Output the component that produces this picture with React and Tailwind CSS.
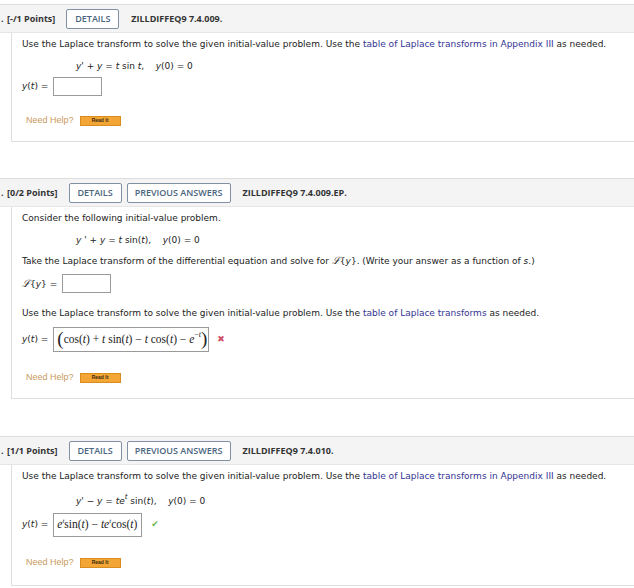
import React from "react";

const sans = { fontFamily: '"DejaVu Sans", Verdana, sans-serif' };
const open = { fontFamily: '"Open Sans", Arial, sans-serif' };

function Header({ points, code, prev }) {
  return (
    <div
      className="flex items-center h-[29px] border-t border-b border-t-[#dcdcdc] border-b-[#e6e6e6] bg-[#f4f4f4] text-[9px] font-bold text-[#333]"
      style={open}
    >
      <span className="w-[7px] pl-[1px]">.</span>
      <span>{points}</span>
      <button className="ml-[11px] w-[53px] h-[20px] border border-[#7f91a3] rounded-[2px] bg-white text-[#4a6580] font-semibold text-[9px]">
        DETAILS
      </button>
      {prev && (
        <button className="ml-[5px] w-[104px] h-[20px] border border-[#7f91a3] rounded-[2px] bg-white text-[#4a6580] font-semibold text-[9px]">
          PREVIOUS ANSWERS
        </button>
      )}
      <span className="ml-[12px]">{code}</span>
    </div>
  );
}

function NeedHelp({ mt }) {
  return (
    <div className={`flex items-center h-[12px] ${mt}`}>
      <span
        className="ml-[4px] text-[9px] text-[#c99b5e]"
        style={{ fontFamily: '"Liberation Sans", Arial, sans-serif' }}
      >
        Need Help?
      </span>
      <span
        className="ml-[6px] w-[41px] h-[10px] flex items-center justify-center bg-[#f3a535] border border-[#d98d1f] text-[5px] font-bold text-[#3a2a10]"
        style={{ fontFamily: '"Liberation Sans", Arial, sans-serif' }}
      >
        Read It
      </span>
    </div>
  );
}

const I = ({ children }) => <i>{children}</i>;

const serif = { fontFamily: '"Liberation Serif", "Times New Roman", serif' };

export default function App() {
  return (
    <div className="w-[634px] h-[588px] overflow-hidden bg-white text-[#222]" style={sans}>
      {/* Question 1 */}
      <div className="mt-[4px]">
        <Header points="[-/1 Points]" code="ZILLDIFFEQ9 7.4.009." />
        <div className="ml-[11px] border-l border-b border-[#dedede] pl-[10px] pt-[5px] pb-[14px] text-[9px]">
          <div className="leading-[12px] whitespace-nowrap">
            Use the Laplace transform to solve the given initial-value problem. Use the{" "}
            <span className="text-[#343494]">table of Laplace transforms in Appendix III</span> as needed.
          </div>
          <div className="mt-[10px] ml-[54px] leading-[12px] whitespace-pre">
            <I>y</I>' + <I>y</I> = <I>t</I> sin <I>t</I>,{"    "}<I>y</I>(0) = 0
          </div>
          <div className="mt-[5px] flex items-center h-[19px]">
            <span>
              <I>y</I>(<I>t</I>) =
            </span>
            <span className="ml-[5px] w-[49px] h-[19px] border border-[#9a9a9a]" />
          </div>
          <NeedHelp mt="mt-[19px]" />
        </div>
      </div>

      {/* Question 2 */}
      <div className="mt-[36px]">
        <Header points="[0/2 Points]" code="ZILLDIFFEQ9 7.4.009.EP." prev />
        <div className="ml-[11px] border-l border-b border-[#dedede] pl-[10px] pt-[5px] pb-[14px] text-[9px]">
          <div className="leading-[12px]">Consider the following initial-value problem.</div>
          <div className="mt-[10px] ml-[54px] leading-[12px] whitespace-pre">
            <I>y</I> ' + <I>y</I> = <I>t</I> sin(<I>t</I>),{"    "}<I>y</I>(0) = 0
          </div>
          <div className="mt-[9px] leading-[12px] whitespace-nowrap">
            Take the Laplace transform of the differential equation and solve for{" "}
            <span style={serif} className="italic text-[10px]">ℒ</span>{"{"}<I>y</I>{"}"}. (Write your answer as a function of <I>s</I>.)
          </div>
          <div className="mt-[7px] flex items-center h-[19px]">
            <span>
              <span style={serif} className="italic text-[10px]">ℒ</span>{"{"}<I>y</I>{"}"} =
            </span>
            <span className="ml-[5px] w-[49px] h-[19px] border border-[#9a9a9a]" />
          </div>
          <div className="mt-[14px] leading-[12px] whitespace-nowrap">
            Use the Laplace transform to solve the given initial-value problem. Use the{" "}
            <span className="text-[#343494]">table of Laplace transforms</span> as needed.
          </div>
          <div className="mt-[8px] flex items-center h-[25px]">
            <span>
              <I>y</I>(<I>t</I>) =
            </span>
            <span
              className="ml-[5px] w-[156px] h-[25px] border border-[#9a9a9a] flex items-center pl-[3px] text-[11.5px] whitespace-pre"
              style={serif}
            >
              <span className="text-[19px] leading-none -mt-[2px]">(</span>
              cos(<I>t</I>) + <I>t</I> sin(<I>t</I>) − <I>t</I> cos(<I>t</I>) − <I>e</I>
              <sup className="text-[8px] -top-[5px]">−<I>t</I></sup>
              <span className="text-[19px] leading-none -mt-[2px]">)</span>
            </span>
            <span className="ml-[8px] text-[9px] text-[#d0506a]">✖</span>
          </div>
          <NeedHelp mt="mt-[20px]" />
        </div>
      </div>

      {/* Question 3 */}
      <div className="mt-[37px]">
        <Header points="[1/1 Points]" code="ZILLDIFFEQ9 7.4.010." prev />
        <div className="ml-[11px] border-l border-b border-[#dedede] pl-[10px] pt-[5px] pb-[16px] text-[9px]">
          <div className="leading-[12px] whitespace-nowrap">
            Use the Laplace transform to solve the given initial-value problem. Use the{" "}
            <span className="text-[#343494]">table of Laplace transforms in Appendix III</span> as needed.
          </div>
          <div className="mt-[13px] ml-[54px] leading-[12px] whitespace-pre">
            <I>y</I>' − <I>y</I> = <I>t</I><I>e</I>
            <sup className="text-[7px] -top-[5px]"><I>t</I></sup> sin(<I>t</I>),{"    "}<I>y</I>(0) = 0
          </div>
          <div className="mt-[6px] flex items-center h-[24px]">
            <span>
              <I>y</I>(<I>t</I>) =
            </span>
            <span
              className="ml-[5px] w-[89px] h-[24px] border border-[#9a9a9a] flex items-center pl-[3px] text-[11.5px] whitespace-pre"
              style={serif}
            >
              <I>e</I>
              <sup className="text-[7px] -top-[4px]"><I>t</I></sup>sin(<I>t</I>) − <I>te</I>
              <sup className="text-[7px] -top-[4px]"><I>t</I></sup>cos(<I>t</I>)
            </span>
            <span className="ml-[9px] text-[9px] text-[#6cb84e]">✔</span>
          </div>
          <NeedHelp mt="mt-[20px]" />
        </div>
      </div>
    </div>
  );
}
